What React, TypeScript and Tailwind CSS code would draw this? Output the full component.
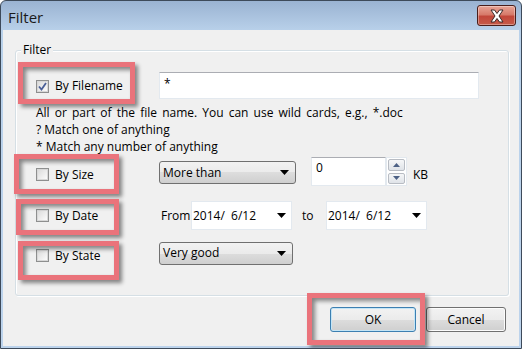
import React from 'react';

const uiFont = { fontFamily: '"Open Sans", "Liberation Sans", sans-serif' };

function CheckBox({ checked }: { checked?: boolean }) {
  return (
    <div className="w-[13px] h-[13px] border border-[#8e8f8f] bg-[#f4f4f4] flex items-center justify-center shrink-0">
      <div className="w-[11px] h-[11px] border border-[#d8d8d8] bg-gradient-to-br from-[#dcdcdc] to-[#fbfbfb] flex items-center justify-center">
        {checked && (
          <svg width="9" height="9" viewBox="0 0 9 9">
            <path d="M1 4.5 L3.5 7.5 L8 1" fill="none" stroke="#4a5f97" strokeWidth="1.8" />
          </svg>
        )}
      </div>
    </div>
  );
}

function Arrow() {
  return (
    <svg width="9" height="5" viewBox="0 0 9 5" className="shrink-0">
      <path d="M0 0 H9 L4.5 5 Z" fill="#000" />
    </svg>
  );
}

function Combo({ text, w }: { text: string; w: string }) {
  return (
    <div
      className={`${w} h-[23px] rounded-[3px] border border-[#707070] flex items-center pl-[3px] pr-[6px] bg-[linear-gradient(#f2f2f2_0%,#ebebeb_50%,#dddddd_50%,#cfcfcf_100%)]`}
    >
      <span className="flex-1 text-[12px] leading-none">{text}</span>
      <Arrow />
    </div>
  );
}

function DatePicker({ value }: { value: string }) {
  return (
    <div className="w-[101px] h-[29px] bg-white border border-[#e3e9ef] flex items-center pl-[1px] pr-[5px]">
      <span className="flex-1 text-[12px] whitespace-pre">{value}</span>
      <Arrow />
    </div>
  );
}

function SpinButton({ up }: { up?: boolean }) {
  return (
    <div className="flex-1 m-[1px] rounded-[2px] border border-[#b8bcc3] bg-[linear-gradient(#f6f7f8,#dfe3e8)] flex items-center justify-center">
      <svg width="7" height="4" viewBox="0 0 7 4">
        <path d={up ? 'M0 4 H7 L3.5 0 Z' : 'M0 0 H7 L3.5 4 Z'} fill="#4d6185" />
      </svg>
    </div>
  );
}

function Marker({ className }: { className: string }) {
  return (
    <div
      className={`absolute border-[5px] border-[#ea737b] shadow-[3px_3px_4px_rgba(0,0,0,0.45),inset_3px_3px_4px_rgba(0,0,0,0.45)] pointer-events-none ${className}`}
    />
  );
}

export default function App() {
  return (
    <div
      className="relative w-[522px] h-[349px] border border-[#3d4a5a] rounded-t-[6px] overflow-hidden bg-[linear-gradient(#9ab3d2_0px,#b9d1ea_30px,#bcd3ec_100%)] flex flex-col text-black"
      style={uiFont}
    >
      {/* Title bar */}
      <div className="h-[29px] flex items-start justify-between shrink-0">
        <span className="text-[15px] text-[#1a1a1a] mt-[6px] ml-[7px] leading-[20px]">Filter</span>
        <div className="mt-[4px] mr-[5px] w-[39px] h-[21px] rounded-[3px] border border-[#4a1e1a] bg-[linear-gradient(#e8a596_0%,#d77a6a_45%,#c2473a_55%,#c65a48_100%)] flex items-center justify-center shadow-[inset_0_0_0_1px_rgba(255,255,255,0.35)]">
          <svg width="16" height="14" viewBox="0 0 16 14">
            <path
              d="M2 1 H5.5 L8 4.5 L10.5 1 H14 L10 7 L14 13 H10.5 L8 9.5 L5.5 13 H2 L6 7 Z"
              fill="#ffffff"
              stroke="#3a2a2a"
              strokeWidth="1"
              strokeLinejoin="round"
            />
          </svg>
        </div>
      </div>

      {/* Client area */}
      <div className="flex-1 mx-[2px] mb-[2px] bg-[#f0f0f0] flex flex-col">
        {/* Group box */}
        <div className="relative mt-[20px] ml-[12px] mr-[10px] h-[246px] border border-[#d5dfe5] rounded-[3px] shadow-[inset_1px_1px_0_#fff,1px_1px_0_#fff]">
          <span className="absolute left-[5px] top-[-10px] px-[2px] bg-[#f0f0f0] text-[12px] leading-[17px]">
            Filter
          </span>

          <div className="pl-[20px] flex flex-col">
            {/* By Filename */}
            <div className="mt-[21px] h-[27px] flex items-center">
              <div className="w-[123px] flex items-center gap-[6px] mt-[1px]">
                <CheckBox checked />
                <span className="text-[12px]">By Filename</span>
              </div>
              <div className="w-[320px] h-[27px] bg-white border border-[#e3e9ef] border-t-[#abadb3] pl-[4px] pt-[2px] text-[12px]">
                *
              </div>
            </div>

            <div className="mt-[5px] text-[12px] leading-[17px]">
              <div className="[word-spacing:2px]">All or part of the file name. You can use wild cards, e.g., *.doc</div>
              <div>? Match one of anything</div>
              <div>* Match any number of anything</div>
            </div>

            {/* By Size */}
            <div className="mt-[2px] h-[29px] flex items-start">
              <div className="w-[123px] h-[15px] mt-[10px] flex items-center gap-[6px]">
                <CheckBox />
                <span className="text-[12px]">By Size</span>
              </div>
              <div className="mt-[4px]">
                <Combo text="More than" w="w-[137px]" />
              </div>
              <div className="ml-[15px] h-[29px] flex">
                <div className="w-[75px] h-[29px] bg-white border border-[#e3e9ef] border-t-[#abadb3] pl-[4px] pt-[1px] text-[12px]">
                  0
                </div>
                <div className="w-[21px] h-[29px] flex flex-col border border-[#e3e9ef] bg-white">
                  <SpinButton up />
                  <SpinButton />
                </div>
              </div>
              <span className="ml-[6px] mt-[11px] text-[12px] leading-[14px]">KB</span>
            </div>

            {/* By Date */}
            <div className="mt-[15px] h-[29px] flex items-center">
              <div className="w-[123px] flex items-center gap-[6px]">
                <CheckBox />
                <span className="text-[12px]">By Date</span>
              </div>
              <span className="ml-[2px] w-[30px] text-[12px]">From</span>
              <DatePicker value="2014/  6/12" />
              <span className="ml-[10px] w-[24px] text-[12px]">to</span>
              <DatePicker value="2014/  6/12" />
            </div>

            {/* By State */}
            <div className="mt-[11px] h-[24px] flex items-center">
              <div className="w-[123px] flex items-center gap-[6px] mt-[5px]">
                <CheckBox />
                <span className="text-[12px]">By State</span>
              </div>
              <Combo text="Very good" w="w-[134px]" />
            </div>
          </div>
        </div>

        {/* Buttons */}
        <div className="mt-[11px] mr-[13px] flex justify-end gap-[10px]">
          <button className="w-[86px] h-[25px] rounded-[3px] border border-[#3c7fb1] bg-[linear-gradient(#f2f2f2_0%,#ebebeb_50%,#dddddd_50%,#cfcfcf_100%)] shadow-[inset_0_0_0_1px_#c4e5f6] text-[12px]">
            OK
          </button>
          <button className="w-[80px] h-[25px] rounded-[3px] border border-[#707070] bg-[linear-gradient(#f2f2f2_0%,#ebebeb_50%,#dddddd_50%,#cfcfcf_100%)] shadow-[inset_0_0_0_1px_#fcfcfc] text-[12px]">
            Cancel
          </button>
        </div>
      </div>

      {/* Annotation frames */}
      <Marker className="left-[17px] top-[61px] w-[117px] h-[42px]" />
      <Marker className="left-[13px] top-[153px] w-[105px] h-[40px]" />
      <Marker className="left-[15px] top-[198px] w-[103px] h-[36px]" />
      <Marker className="left-[17px] top-[240px] w-[101px] h-[39px]" />
      <Marker className="left-[306px] top-[292px] w-[118px] h-[52px]" />
    </div>
  );
}
